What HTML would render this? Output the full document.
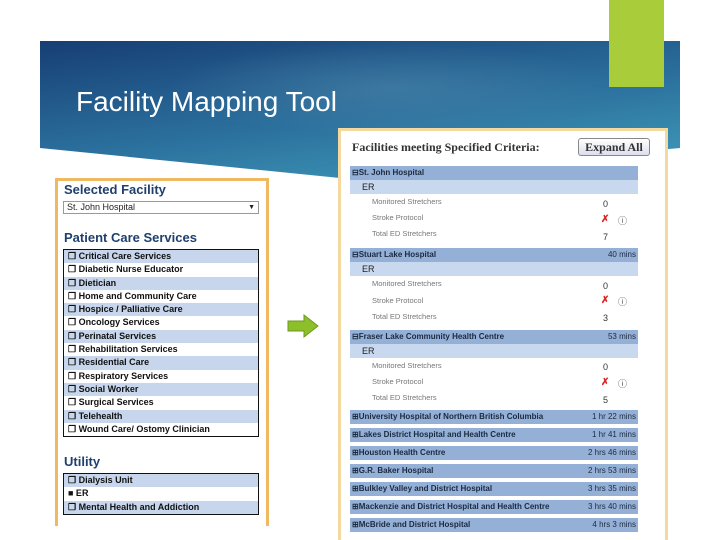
<!DOCTYPE html>
<html><head><style>
*{margin:0;padding:0;box-sizing:border-box}
body{width:720px;height:540px;background:#fff;position:relative;overflow:hidden;font-family:"Liberation Sans",sans-serif}
.abs{position:absolute}
.lp{left:55px;top:178px;width:214px;height:348px;border:3px solid #f0b860;border-bottom:none;background:#fff}
.h{color:#1f3f6e;font-weight:bold;position:absolute}
.box{position:absolute;left:63px;width:196px;border:1px solid #111;background:#fff}
.box div{height:13.3px;font-size:9px;font-weight:bold;color:#111;padding-left:4px;line-height:13px;white-space:nowrap}
.box div:nth-child(odd){background:#c7d6ec}
.rp{left:338px;top:128px;width:330px;height:412px;border:3px solid #f3d9a0;border-bottom:none;background:#fff}
.hr{position:absolute;left:350px;width:288px;height:14px;background:#95b0d6;font-size:8px;font-weight:bold;color:#1a2a40;line-height:14px;padding-left:2px;white-space:nowrap}
.hr span{position:absolute;right:2px;font-weight:normal}
.er{position:absolute;left:350px;width:288px;height:14px;background:#c7d8ef;font-size:9px;color:#222;line-height:14px;padding-left:12px}
.d{position:absolute;left:372px;font-size:7.5px;color:#777}
.v{position:absolute;left:603px;font-size:9px;color:#333}
.x{position:absolute;left:601px;font-size:10px;color:#d22;font-weight:bold}
.i{position:absolute;left:618px;font-size:9px;color:#444}
</style></head><body>
<svg class="abs" style="left:0;top:0" width="720" height="540">
<defs><linearGradient id="g" x1="0" y1="0" x2="0.6" y2="1"><stop offset="0" stop-color="#173e74"/><stop offset="0.6" stop-color="#2a6e9c"/><stop offset="1" stop-color="#3a90b2"/></linearGradient>
<radialGradient id="r" cx="0.55" cy="0.35" r="0.35"><stop offset="0" stop-color="#4a84a8" stop-opacity="0.6"/><stop offset="1" stop-color="#4a84a8" stop-opacity="0"/></radialGradient></defs>
<polygon points="40,41 680,41 680,148 340,178 40,148" fill="url(#g)"/>
<polygon points="40,41 680,41 680,148 340,178 40,148" fill="url(#r)"/>
<rect x="609" y="0" width="55" height="87" fill="#a8cc3a"/>
<polygon points="288,321 304,321 304,315 318,326 304,337 304,331 288,331" fill="#8cbf2a" stroke="#6a9a1e" stroke-width="1"/>
</svg>
<div class="abs" style="left:76px;top:86px;font-size:28px;color:#fff">Facility Mapping Tool</div>

<div class="abs lp"></div>
<div class="h" style="left:64px;top:182px;font-size:13px">Selected Facility</div>
<div class="abs" style="left:63px;top:201px;width:196px;height:13px;border:1px solid #999;font-size:9px;line-height:11px;padding-left:3px;color:#222">St. John Hospital<span style="position:absolute;right:3px;font-size:7px">▼</span></div>
<div class="h" style="left:64px;top:230px;font-size:13px">Patient Care Services</div>
<div class="box" style="top:249px">
<div>❒ Critical Care Services</div><div>❒ Diabetic Nurse Educator</div><div>❒ Dietician</div><div>❒ Home and Community Care</div><div>❒ Hospice / Palliative Care</div><div>❒ Oncology Services</div><div>❒ Perinatal Services</div><div>❒ Rehabilitation Services</div><div>❒ Residential Care</div><div>❒ Respiratory Services</div><div>❒ Social Worker</div><div>❒ Surgical Services</div><div>❒ Telehealth</div><div>❒ Wound Care/ Ostomy Clinician</div>
</div>
<div class="h" style="left:64px;top:454px;font-size:13px">Utility</div>
<div class="box" style="top:473px">
<div>❒ Dialysis Unit</div><div>■ ER</div><div>❒ Mental Health and Addiction</div>
</div>

<div class="abs rp"></div>
<div class="abs" style="left:352px;top:140px;font-family:'Liberation Serif',serif;font-weight:bold;font-size:12px;color:#333">Facilities meeting Specified Criteria:</div>
<div class="abs" style="left:578px;top:138px;width:72px;height:18px;border:1px solid #888;border-radius:3px;background:linear-gradient(#fff,#dde);font-family:'Liberation Serif',serif;font-weight:bold;font-size:12px;color:#333;text-align:center;line-height:16px">Expand All</div>

<div class="hr" style="top:166px">⊟St. John Hospital</div>
<div class="er" style="top:180px">ER</div>
<div class="d" style="top:197px">Monitored Stretchers</div><div class="v" style="top:199px">0</div>
<div class="d" style="top:213px">Stroke Protocol</div><div class="x" style="top:214px">✗</div><div class="i" style="top:214px">ⓘ</div>
<div class="d" style="top:229px">Total ED Stretchers</div><div class="v" style="top:232px">7</div>

<div class="hr" style="top:248px">⊟Stuart Lake Hospital<span>40 mins</span></div>
<div class="er" style="top:262px">ER</div>
<div class="d" style="top:279px">Monitored Stretchers</div><div class="v" style="top:281px">0</div>
<div class="d" style="top:296px">Stroke Protocol</div><div class="x" style="top:295px">✗</div><div class="i" style="top:295px">ⓘ</div>
<div class="d" style="top:312px">Total ED Stretchers</div><div class="v" style="top:313px">3</div>

<div class="hr" style="top:330px">⊟Fraser Lake Community Health Centre<span>53 mins</span></div>
<div class="er" style="top:344px">ER</div>
<div class="d" style="top:361px">Monitored Stretchers</div><div class="v" style="top:362px">0</div>
<div class="d" style="top:377px">Stroke Protocol</div><div class="x" style="top:377px">✗</div><div class="i" style="top:377px">ⓘ</div>
<div class="d" style="top:393px">Total ED Stretchers</div><div class="v" style="top:395px">5</div>

<div class="hr" style="top:410px">⊞University Hospital of Northern British Columbia<span>1 hr 22 mins</span></div>
<div class="hr" style="top:428px">⊞Lakes District Hospital and Health Centre<span>1 hr 41 mins</span></div>
<div class="hr" style="top:446px">⊞Houston Health Centre<span>2 hrs 46 mins</span></div>
<div class="hr" style="top:464px">⊞G.R. Baker Hospital<span>2 hrs 53 mins</span></div>
<div class="hr" style="top:482px">⊞Bulkley Valley and District Hospital<span>3 hrs 35 mins</span></div>
<div class="hr" style="top:500px">⊞Mackenzie and District Hospital and Health Centre<span>3 hrs 40 mins</span></div>
<div class="hr" style="top:518px">⊞McBride and District Hospital<span>4 hrs 3 mins</span></div>
</body></html>
